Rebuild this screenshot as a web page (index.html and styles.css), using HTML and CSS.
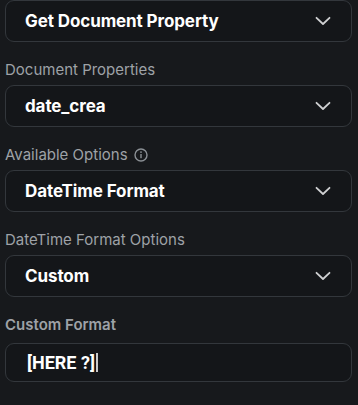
FILE: index.html
```html
<!DOCTYPE html>
<html>
<head>
<meta charset="utf-8">
<link rel="stylesheet" href="styles.css">
</head>
<body>
<div class="panel">
  <div class="field first">
    <div class="select">
      <span class="value">Get Document Property</span>
      <svg class="chev" width="16" height="10" viewBox="0 0 16 10"><path d="M1.5 1.8 L8 8 L14.5 1.8" fill="none" stroke="#cfd0d2" stroke-width="1.8" stroke-linecap="round" stroke-linejoin="round"/></svg>
    </div>
  </div>
  <div class="field">
    <div class="label">Document Properties</div>
    <div class="select">
      <span class="value">date_crea</span>
      <svg class="chev" width="16" height="10" viewBox="0 0 16 10"><path d="M1.5 1.8 L8 8 L14.5 1.8" fill="none" stroke="#cfd0d2" stroke-width="1.8" stroke-linecap="round" stroke-linejoin="round"/></svg>
    </div>
  </div>
  <div class="field">
    <div class="label">Available Options
      <svg class="info" width="14" height="14" viewBox="0 0 14 14"><circle cx="7" cy="7" r="6" fill="none" stroke="#8b9095" stroke-width="1.4"/><rect x="6.3" y="6" width="1.4" height="4.2" fill="#8b9095"/><circle cx="7" cy="4.1" r="0.9" fill="#8b9095"/></svg>
    </div>
    <div class="select">
      <span class="value">DateTime Format</span>
      <svg class="chev" width="16" height="10" viewBox="0 0 16 10"><path d="M1.5 1.8 L8 8 L14.5 1.8" fill="none" stroke="#cfd0d2" stroke-width="1.8" stroke-linecap="round" stroke-linejoin="round"/></svg>
    </div>
  </div>
  <div class="field">
    <div class="label">DateTime Format Options</div>
    <div class="select">
      <span class="value">Custom</span>
      <svg class="chev" width="16" height="10" viewBox="0 0 16 10"><path d="M1.5 1.8 L8 8 L14.5 1.8" fill="none" stroke="#cfd0d2" stroke-width="1.8" stroke-linecap="round" stroke-linejoin="round"/></svg>
    </div>
  </div>
  <div class="field">
    <div class="label strong">Custom Format</div>
    <div class="input">
      <span class="typed">[HERE ?]</span><span class="caret"></span>
    </div>
  </div>
</div>
</body>
</html>
```
FILE: styles.css
```css
html, body {
  margin: 0;
  padding: 0;
  background: #17191c;
  height: 100%;
}
body {
  font-family: Inter, "Noto Sans", sans-serif;
  color: #fff;
}
.panel {
  padding: 0 6px 0 5px;
  display: flex;
  flex-direction: column;
  gap: 18px;
}
.field {
  display: flex;
  flex-direction: column;
  gap: 5px;
}
.label {
  height: 20px;
  line-height: 20px;
  font-size: 15px;
  color: #9ea2a7;
  display: flex;
  align-items: center;
  gap: 6px;
}
.label.strong {
  font-weight: 600;
}
.info {
  display: block;
}
.select, .input {
  box-sizing: border-box;
  height: 42px;
  border: 1px solid #33373c;
  border-radius: 9px;
  background: #141619;
  display: flex;
  align-items: center;
  padding: 0 20px 0 19px;
}
.select {
  justify-content: space-between;
}
.value {
  font-size: 17px;
  font-weight: 700;
  color: #fff;
  letter-spacing: -0.1px;
}
.chev {
  display: block;
}
.input {
  height: 39px;
  margin-top: 3px;
  padding-left: 21px;
}
.typed {
  font-family: Roboto, sans-serif;
  font-weight: 700;
  font-size: 18px;
  letter-spacing: 0;
  color: #fff;
}
.caret {
  display: inline-block;
  width: 2px;
  height: 19px;
  background: #c9cacc;
  margin-left: 1px;
}
```
